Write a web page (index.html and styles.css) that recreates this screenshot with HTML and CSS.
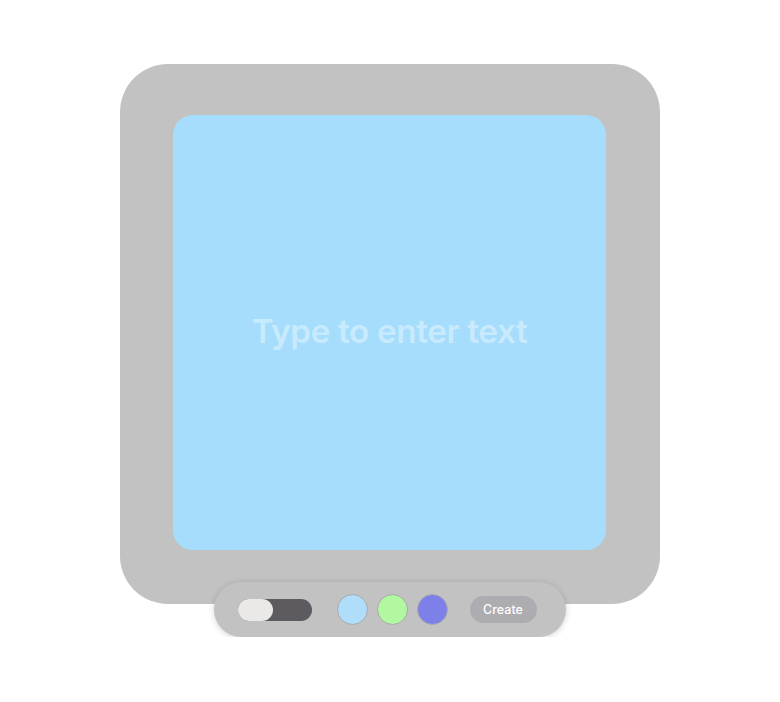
FILE: index.html
```html
<!DOCTYPE html>
<html>
<head>
<meta charset="utf-8">
<link rel="stylesheet" href="styles.css">
</head>
<body>
<div class="stage">
  <div class="frame">
    <div class="canvas">
      <div class="placeholder">Type to enter text</div>
    </div>
  </div>
  <div class="toolbar">
    <div class="toggle"><div class="knob"></div></div>
    <div class="swatches">
      <div class="swatch blue"></div>
      <div class="swatch green"></div>
      <div class="swatch purple"></div>
    </div>
    <div class="create">Create</div>
  </div>
</div>
</body>
</html>
```
FILE: styles.css
```css
html, body {
  margin: 0;
  padding: 0;
  background: #ffffff;
}
body {
  font-family: Inter, "Liberation Sans", sans-serif;
}
.stage {
  display: flex;
  flex-direction: column;
  align-items: center;
  padding-top: 64px;
}
.frame {
  width: 540px;
  height: 540px;
  box-sizing: border-box;
  background: #c2c2c2;
  border-radius: 48px;
  padding: 51px 54px 54px 53px;
  display: flex;
}
.canvas {
  flex: 1;
  background: #a6dcfc;
  border-radius: 20px;
  display: flex;
  align-items: center;
  justify-content: center;
}
.placeholder {
  color: #c8eafd;
  font-size: 33.3px;
  font-weight: 600;
  letter-spacing: -0.4px;
  margin-top: -3px;
}
.toolbar {
  margin-top: -22px;
  width: 352px;
  height: 55px;
  box-sizing: border-box;
  background: #c2c2c2;
  border-radius: 28px;
  box-shadow: 0 1px 6px rgba(0,0,0,0.18);
  display: flex;
  align-items: center;
  padding-left: 24px;
  margin-left: -1px;
}
.toggle {
  width: 74px;
  height: 22px;
  border-radius: 11px;
  background: #5d5b5f;
  display: flex;
}
.knob {
  width: 35px;
  height: 22px;
  border-radius: 11px;
  background: #ebe9e7;
}
.swatches {
  display: flex;
  gap: 9px;
  margin-left: 25px;
}
.swatch {
  width: 31px;
  height: 31px;
  box-sizing: border-box;
  border-radius: 50%;
  border: 1.5px solid #a9a9ab;
}
.blue { background: #b0ddf9; }
.green { background: #b1f8a1; }
.purple { background: #7e80ea; }
.create {
  margin-left: 22px;
  width: 67px;
  height: 27px;
  border-radius: 14px;
  background: #acacb1;
  color: #ffffff;
  font-size: 12.5px;
  font-weight: 500;
  display: flex;
  align-items: center;
  justify-content: center;
}
```
